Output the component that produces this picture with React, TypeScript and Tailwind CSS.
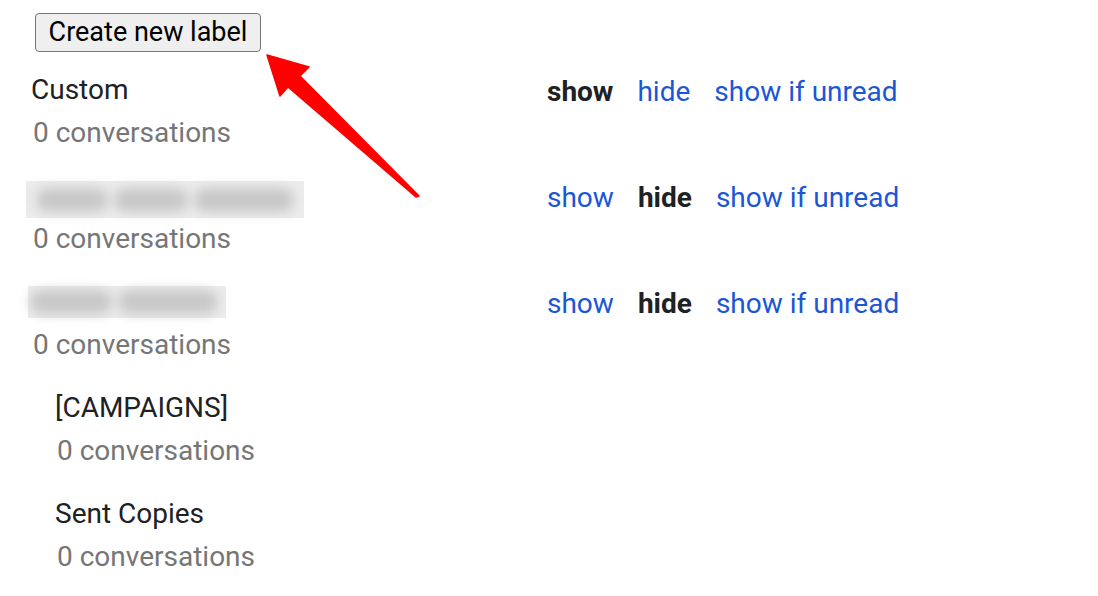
import React from "react";

type Row = {
  label?: string;
  blur?: { w: number; h: number; blobs: { w: number }[]; gap: number; pl: number };
  indent?: boolean;
  state?: "show" | "hide";
};

const rows: Row[] = [
  { label: "Custom", state: "show" },
  { blur: { w: 278, h: 37, blobs: [{ w: 72 }, { w: 74 }, { w: 100 }], gap: 6, pl: 10 }, state: "hide" },
  { blur: { w: 198, h: 32, blobs: [{ w: 82 }, { w: 100 }], gap: 6, pl: 2 }, state: "hide" },
  { label: "[CAMPAIGNS]", indent: true },
  { label: "Sent Copies", indent: true },
];

function Actions({ state }: { state: "show" | "hide" }) {
  const cls = (active: boolean) =>
    active ? "font-bold text-[#202124]" : "text-[#1a56d6] cursor-pointer";
  return (
    <div className="flex items-center gap-[24px] pt-[3px]">
      <span className={cls(state === "show")}>show</span>
      <span className={cls(state === "hide")}>hide</span>
      <span className={cls(false)}>show if unread</span>
    </div>
  );
}

export default function App() {
  return (
    <div
      className="relative w-[1098px] h-[596px] bg-white overflow-hidden text-[28px]"
      style={{ fontFamily: "Roboto, 'Liberation Sans', sans-serif" }}
    >
      <div className="pt-[11px] pl-[35px]">
        <button className="h-[39px] w-[226px] rounded-[4px] border border-[#767676] bg-[#efefef] text-[27px] text-black leading-none">
          Create new label
        </button>
      </div>
      <div className="mt-[15px] pl-[31px] flex flex-col">
        {rows.map((r, i) => (
          <div key={i} className="flex mb-[20px]">
            <div className={`w-[516px] flex flex-col ${r.indent ? "pl-[24px]" : ""}`}>
              <div className="h-[44px] flex items-center leading-none text-[#202124]">
                {r.label ? (
                  r.label
                ) : r.blur ? (
                  <div
                    className={`flex items-center bg-[#ececec] ${i === 1 ? "-ml-[5px] mt-[7px]" : "-ml-[3px] mt-[0px]"}`}
                    style={{ width: r.blur.w, height: r.blur.h, gap: r.blur.gap, paddingLeft: r.blur.pl }}
                  >
                    {r.blur.blobs.map((b, j) => (
                      <div
                        key={j}
                        className="h-[24px] rounded-full bg-[#c8c8c8] blur-[6px]"
                        style={{ width: b.w }}
                      />
                    ))}
                  </div>
                ) : null}
              </div>
              <div className="h-[42px] flex items-center pl-[2px] leading-none text-[#767676]">
                0 conversations
              </div>
            </div>
            {r.state && (
              <div className="h-[44px] flex items-center leading-none">
                <Actions state={r.state} />
              </div>
            )}
          </div>
        ))}
      </div>
      <svg
        className="absolute left-0 top-0 pointer-events-none"
        width="1098"
        height="596"
        viewBox="0 0 1098 596"
      >
        <polygon
          points="267,55 309,67 300,76 419,196 416,197 288,87 280,96"
          fill="#ff0000"
          stroke="#ff0000"
          strokeWidth="1.5"
          strokeLinejoin="round"
        />
      </svg>
    </div>
  );
}
